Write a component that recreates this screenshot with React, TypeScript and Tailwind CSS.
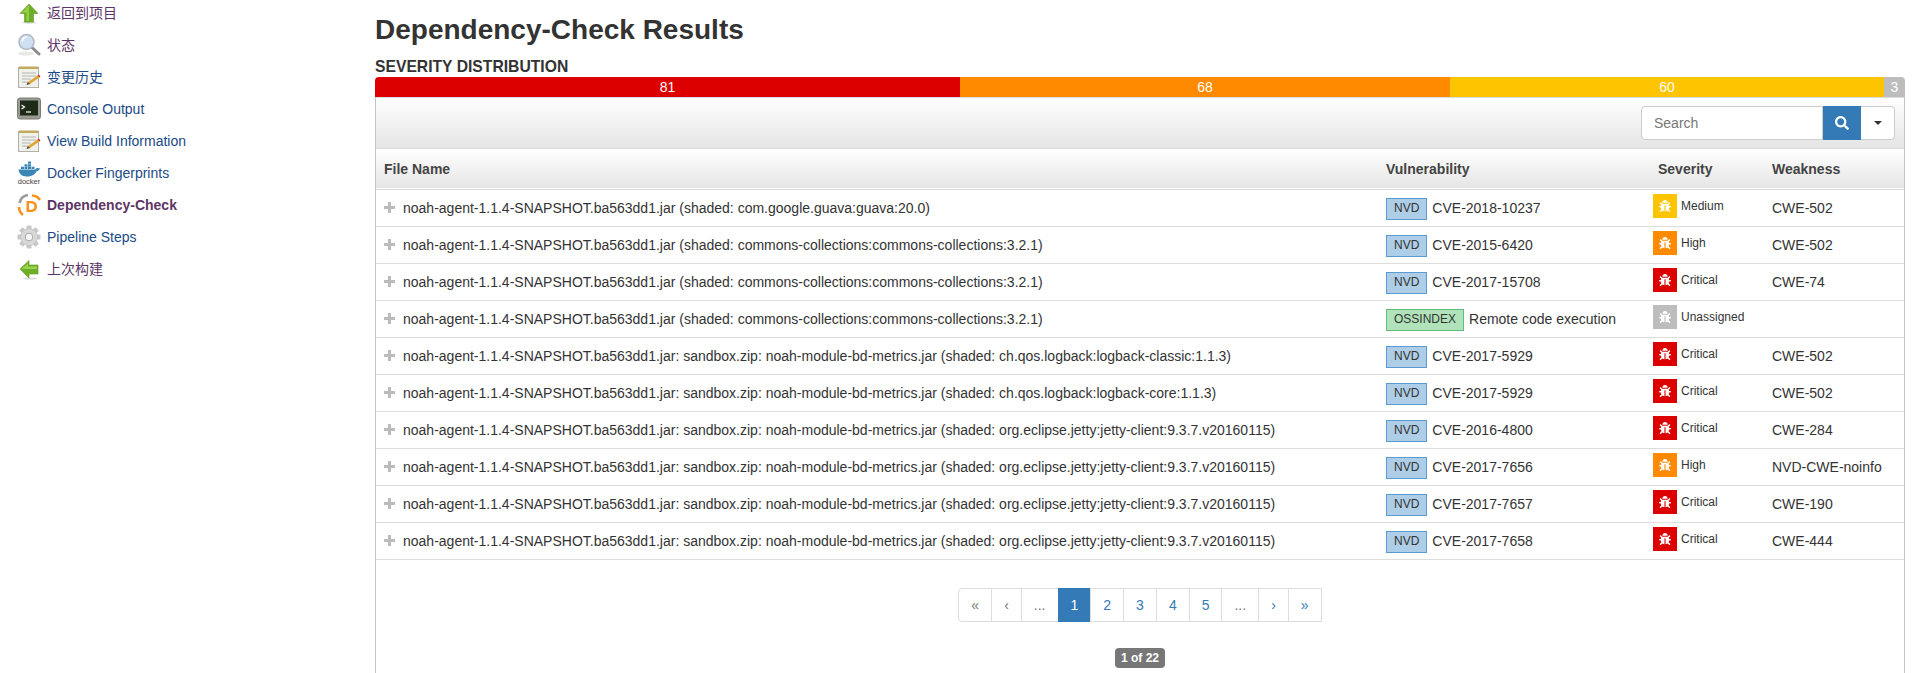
import { FaBug, FaSearch } from "react-icons/fa";

const sidebarLinks = [
  { label: "返回到项目", icon: "up", visited: true },
  { label: "状态", icon: "search", visited: true },
  { label: "变更历史", icon: "notepad", visited: false },
  { label: "Console Output", icon: "console", visited: false },
  { label: "View Build Information", icon: "notepad", visited: false },
  { label: "Docker Fingerprints", icon: "docker", visited: false },
  { label: "Dependency-Check", icon: "dep", visited: true, bold: true },
  { label: "Pipeline Steps", icon: "gear", visited: false },
  { label: "上次构建", icon: "left", visited: true },
];

const prefix = "noah-agent-1.1.4-SNAPSHOT.ba563dd1.jar";
const metrics = `${prefix}: sandbox.zip: noah-module-bd-metrics.jar`;
const jetty = `${metrics} (shaded: org.eclipse.jetty:jetty-client:9.3.7.v20160115)`;
const collections = `${prefix} (shaded: commons-collections:commons-collections:3.2.1)`;

const rows = [
  { file: `${prefix} (shaded: com.google.guava:guava:20.0)`, src: "NVD", vuln: "CVE-2018-10237", sev: "Medium", cwe: "CWE-502" },
  { file: collections, src: "NVD", vuln: "CVE-2015-6420", sev: "High", cwe: "CWE-502" },
  { file: collections, src: "NVD", vuln: "CVE-2017-15708", sev: "Critical", cwe: "CWE-74" },
  { file: collections, src: "OSSINDEX", vuln: "Remote code execution", sev: "Unassigned", cwe: "" },
  { file: `${metrics} (shaded: ch.qos.logback:logback-classic:1.1.3)`, src: "NVD", vuln: "CVE-2017-5929", sev: "Critical", cwe: "CWE-502" },
  { file: `${metrics} (shaded: ch.qos.logback:logback-core:1.1.3)`, src: "NVD", vuln: "CVE-2017-5929", sev: "Critical", cwe: "CWE-502" },
  { file: jetty, src: "NVD", vuln: "CVE-2016-4800", sev: "Critical", cwe: "CWE-284" },
  { file: jetty, src: "NVD", vuln: "CVE-2017-7656", sev: "High", cwe: "NVD-CWE-noinfo" },
  { file: jetty, src: "NVD", vuln: "CVE-2017-7657", sev: "Critical", cwe: "CWE-190" },
  { file: jetty, src: "NVD", vuln: "CVE-2017-7658", sev: "Critical", cwe: "CWE-444" },
];

const severityBg: Record<string, string> = {
  Critical: "bg-[#dc0000]",
  High: "bg-[#ff8a00]",
  Medium: "bg-[#ffc400]",
  Unassigned: "bg-[#bdbdbd]",
};

const pages = [
  { label: "«", muted: true },
  { label: "‹", muted: true },
  { label: "...", muted: true },
  { label: "1", active: true },
  { label: "2" },
  { label: "3" },
  { label: "4" },
  { label: "5" },
  { label: "...", muted: true },
  { label: "›" },
  { label: "»" },
];

function SideIcon({ name }: { name: string }) {
  if (name === "up") {
    return (
      <svg width="24" height="24" viewBox="0 0 24 24">
        <ellipse cx="12" cy="21.500" rx="7" ry="1.200" fill="#d4d4d4" />
        <path d="M12 3 L21 12.500 H16.500 V21 H7.500 V12.500 H3 Z" fill="#6fae27" stroke="#5c9a1c" strokeWidth="0.6" />
        <path d="M12 4 L5 11.500 H9.500 V20 H12 Z" fill="#93cf45" />
      </svg>
    );
  }
  if (name === "left") {
    return (
      <svg width="24" height="24" viewBox="0 0 24 24">
        <ellipse cx="13" cy="21.500" rx="7" ry="1" fill="#d9d9d9" />
        <path d="M3 12 L12 3.500 V8 H21 V17 H12 V21 Z" fill="#6fae27" stroke="#5c9a1c" strokeWidth="0.6" />
        <path d="M4.500 12 L11 6.500 V9.500 H20 V12 Z" fill="#9bd451" />
      </svg>
    );
  }
  if (name === "search") {
    return (
      <svg width="24" height="24" viewBox="0 0 24 24">
        <ellipse cx="9" cy="20.500" rx="8" ry="2" fill="#e8e8e8" />
        <path d="M15 14.500 L22 21" stroke="#8b8b8b" strokeWidth="3" strokeLinecap="round" />
        <circle cx="9.500" cy="9" r="7.500" fill="#cfe0f4" stroke="#b0b8c2" strokeWidth="1.6" />
        <path d="M5 8.500 A5 5 0 0 1 10 4" fill="none" stroke="#fff" strokeWidth="1.6" />
      </svg>
    );
  }
  if (name === "notepad") {
    return (
      <svg width="24" height="24" viewBox="0 0 24 24">
        <rect x="1.500" y="2.500" width="20" height="20" fill="#f1f1ec" stroke="#b0afa8" />
        <rect x="2" y="1.500" width="19" height="2.500" fill="#c2a95c" />
        <path d="M5 8h14M5 11h14M5 14h9M5 17h6" stroke="#b4b4b4" />
        <path d="M9.500 20 L11 17 L20.500 10.500 L22.500 12.500 L13 19 Z" fill="#dfa63a" />
        <path d="M20.500 10.500 L22.500 12.500 L23.500 11.500 L21.800 9.600 Z" fill="#c9352b" />
        <path d="M9.500 20 L11 17 L13 19 Z" fill="#5a4a32" />
      </svg>
    );
  }
  if (name === "console") {
    return (
      <svg width="24" height="24" viewBox="0 0 24 24">
        <rect x="0.500" y="1" width="23" height="21" rx="2.500" fill="#9a9c94" stroke="#7a7c74" />
        <rect x="3" y="3.500" width="18" height="15" fill="#1d2b18" />
        <path d="M4.500 8 L7.500 10 L4.500 12" fill="none" stroke="#fff" strokeWidth="1.2" />
        <path d="M9 15h5" stroke="#fff" strokeWidth="1.2" />
      </svg>
    );
  }
  if (name === "docker") {
    return (
      <svg width="24" height="24" viewBox="0 0 24 24">
        <path d="M1.500 8.500 H18.500 C19 7 20.500 6.500 23 7.500 C22 9.500 21 10 19.500 10.200 C18 13.500 14.500 15.500 9.500 15.500 C4.500 15.500 2 12.500 1.500 8.500 Z" fill="#3a86b7" />
        <path d="M4 5.800h3v2.200H4zM7.500 5.800h3v2.200h-3zM11 5.800h3v2.200h-3zM7.500 3.200h3v2.200h-3zM11 3.200h3v2.200h-3zM11 0.600h3v2.200h-3zM14.500 5.800h3v2.200h-3z" fill="#3a86b7" />
        <text x="12" y="22.500" textAnchor="middle" fontSize="7.500" fill="#444" fontFamily="Liberation Sans, sans-serif">docker</text>
      </svg>
    );
  }
  if (name === "dep") {
    return (
      <svg width="24" height="24" viewBox="0 0 24 24">
        <path d="M2.500 10 A10 10 0 0 1 11 2" fill="none" stroke="#9c9c9c" strokeWidth="2.6" />
        <path d="M15 2.500 A10 10 0 0 1 23 7" fill="none" stroke="#f7931e" strokeWidth="2.6" />
        <path d="M2 14 A10 10 0 0 0 6 22" fill="none" stroke="#f7931e" strokeWidth="2.6" />
        <path d="M9.500 8 H14 C18 8 20 10.500 20 13.500 C20 16.500 18 19 14 19 H9.500 Z M12 10.200 V16.800 H14 C16 16.800 17.400 15.600 17.400 13.500 C17.400 11.400 16 10.200 14 10.200 Z" fill="#f7931e" fillRule="evenodd" />
      </svg>
    );
  }
  return (
    <svg width="24" height="24" viewBox="0 0 24 24">
      {[0, 45, 90, 135, 180, 225, 270, 315].map((deg) => (
        <rect key={deg} x="9.500" y="0.500" width="5" height="5" rx="0.8" fill="#c8c8c8" transform={`rotate(${deg} 12 12)`} />
      ))}
      <circle cx="12" cy="12" r="8.500" fill="#d8d8d8" stroke="#bdbdbd" strokeWidth="0.6" />
      <circle cx="12" cy="12" r="3.800" fill="#f7f7f7" stroke="#a8a8a8" />
    </svg>
  );
}

function PlusIcon() {
  return (
    <svg width="11" height="11" viewBox="0 0 11 11" className="shrink-0">
      <path d="M4 0h3v4h4v3H7v4H4V7H0V4h4z" fill="#bbbbbb" />
    </svg>
  );
}

export default function App() {
  return (
    <div className="flex h-[673px] overflow-hidden bg-white font-['Liberation_Sans','Noto_Sans_CJK_SC',sans-serif] text-sm text-[#333]">
      <aside className="w-[375px] shrink-0 pl-[17px]">
        {sidebarLinks.map((link) => (
          <div key={link.label} className="flex h-[32px] -translate-y-[3px] items-center gap-[6px]">
            <SideIcon name={link.icon} />
            <span className={`${link.visited ? "text-[#5c3566]" : "text-[#204a87]"} ${link.bold ? "font-bold" : ""}`}>
              {link.label}
            </span>
          </div>
        ))}
      </aside>

      <main className="min-w-0 flex-1 pr-[7px]">
        <h1 className="pt-[13px] pb-[10px] text-[28px] leading-[33px] font-bold">Dependency-Check Results</h1>
        <div className="text-[15.7px] leading-[21px] font-bold">SEVERITY DISTRIBUTION</div>

        <div className="flex h-[20px] overflow-hidden rounded-t-[4px] text-center text-sm leading-[20px] text-white">
          <div className="w-[585px] bg-[#dc0000]">81</div>
          <div className="w-[490px] bg-[#ff8a00]">68</div>
          <div className="flex-1 bg-[#ffc400]">60</div>
          <div className="w-[21px] bg-[#bdbdbd]">3</div>
        </div>

        <div className="h-[600px] border-x border-[#c4c4c4]">
          <div className="flex h-[52px] items-center justify-end border-y border-[#ddd] bg-gradient-to-b from-white to-[#e5e5e5] pr-[9px]">
            <input
              readOnly
              placeholder="Search"
              className="h-[34px] w-[182px] rounded-l border border-[#ccc] bg-white px-[12px] text-sm outline-none placeholder:text-[#777]"
            />
            <button className="flex h-[34px] w-[38px] items-center justify-center bg-[#337ab7] text-white">
              <FaSearch size={14} />
            </button>
            <button className="flex h-[34px] w-[34px] items-center justify-center rounded-r border border-l-0 border-[#ccc] bg-white">
              <span className="h-0 w-0 border-x-[4px] border-t-[4px] border-x-transparent border-t-[#333]" />
            </button>
          </div>

          <table className="w-full table-fixed border-collapse">
            <colgroup>
              <col className="w-[1002px]" />
              <col className="w-[272px]" />
              <col className="w-[114px]" />
              <col />
            </colgroup>
            <thead>
              <tr className="h-[40px] border-b border-[#ddd] bg-gradient-to-b from-white to-[#e5e5e5] text-left font-bold text-[#444]">
                <th className="px-[8px]">File Name</th>
                <th className="px-[8px]">Vulnerability</th>
                <th className="px-[8px]">Severity</th>
                <th className="px-[8px]">Weakness</th>
              </tr>
            </thead>
            <tbody>
              {rows.map((row, i) => (
                <tr key={i} className="h-[37px] border-b border-[#ddd]">
                  <td className="px-[8px] whitespace-nowrap">
                    <div className="flex items-center gap-[8px]">
                      <PlusIcon />
                      <span>{row.file}</span>
                    </div>
                  </td>
                  <td className="px-[8px] whitespace-nowrap">
                    <div className="flex items-center gap-[5px]">
                      <span
                        className={`mt-[2px] h-[22px] border px-[7px] text-xs leading-[19px] ${
                          row.src === "NVD" ? "border-[#5b9bd1] bg-[#aecde6]" : "border-[#5fbf7f] bg-[#b0e3b9]"
                        }`}
                      >
                        {row.src}
                      </span>
                      {row.vuln}
                    </div>
                  </td>
                  <td className="pl-[3px]">
                    <div className="flex -translate-y-[2px] items-center gap-[4px] text-xs">
                      <span className={`flex h-[24px] w-[24px] items-center justify-center text-white ${severityBg[row.sev]}`}>
                        <FaBug size={12} />
                      </span>
                      {row.sev}
                    </div>
                  </td>
                  <td className="px-[8px] whitespace-nowrap">{row.cwe}</td>
                </tr>
              ))}
            </tbody>
          </table>

          <div className="mt-[28px] flex justify-center">
            {pages.map((page, i) => (
              <span
                key={i}
                className={`-ml-px h-[34px] border px-[12px] leading-[32px] first:ml-0 first:rounded-l ${
                  page.active
                    ? "border-[#337ab7] bg-[#337ab7] text-white"
                    : `border-[#ddd] ${page.muted ? "text-[#777]" : "text-[#337ab7]"}`
                }`}
              >
                {page.label}
              </span>
            ))}
          </div>

          <div className="mt-[26px] flex justify-center">
            <span className="h-[20px] rounded-[4px] bg-[#777] px-[6px] text-xs leading-[20px] font-bold text-white">1 of 22</span>
          </div>
        </div>
      </main>
    </div>
  );
}
